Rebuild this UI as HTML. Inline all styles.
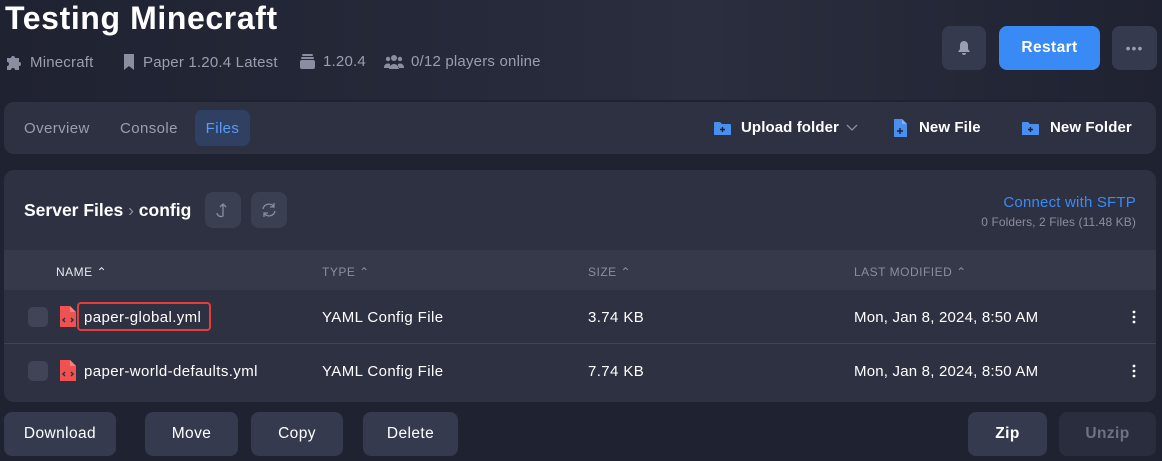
<!DOCTYPE html>
<html><head><meta charset="utf-8"><style>
*{box-sizing:border-box;margin:0;padding:0}
body{width:1162px;height:461px;overflow:hidden;background:#1f2231;font-family:"Liberation Sans",sans-serif;color:#fff;position:relative;letter-spacing:.4px}
.a{position:absolute}
.meta{top:53px;font-size:15px;color:#9a9eb0;display:flex;align-items:center;gap:7px;letter-spacing:.2px}
.panel{background:#2e3142;border-radius:10px}
.btn{position:absolute;background:#363a4e;border-radius:8px;display:flex;align-items:center;justify-content:center;font-size:15.5px;color:#fff}
.hd{top:265px;font-size:12px;color:#8a8ea0;letter-spacing:.5px}
.cell{font-size:15px;color:#fff}
.nb{font-size:15px;font-weight:bold;letter-spacing:.1px}
</style></head><body>
<div class="a" style="left:0;top:0;width:1162px;height:100px;background:linear-gradient(90deg,#1f2231 0%,#262a3a 45%,#2a2e3e 60%,#1f2231 100%)"></div>
<div class="a" style="left:5px;top:0px;font-size:32px;font-weight:bold;letter-spacing:.6px">Testing Minecraft</div>
<div class="a meta" style="left:5px"><svg width="18" height="18" viewBox="0 0 18 18"><path d="M2 5h4a2 2 0 1 1 4 0h4v4a2 2 0 1 1 0 4v4h-4a2 2 0 1 0-4 0H2v-4a2 2 0 1 0 0-4z" fill="#8a8ea0"/></svg>Minecraft</div>
<div class="a meta" style="left:122px"><svg width="14" height="18" viewBox="0 0 14 18"><path d="M2 1h10v16l-5-4-5 4z" fill="#8a8ea0"/></svg>Paper 1.20.4 Latest</div>
<div class="a meta" style="left:299px"><svg width="17" height="17" viewBox="0 0 17 17"><rect x="3" y="1" width="11" height="2" rx="1" fill="#8a8ea0"/><rect x="2" y="4" width="13" height="2" rx="1" fill="#8a8ea0"/><rect x="1" y="7" width="15" height="9" rx="2" fill="#8a8ea0"/></svg>1.20.4</div>
<div class="a meta" style="left:384px"><svg width="20" height="17" viewBox="0 0 20 17"><circle cx="10" cy="5" r="3" fill="#8a8ea0"/><circle cx="4" cy="6" r="2.2" fill="#8a8ea0"/><circle cx="16" cy="6" r="2.2" fill="#8a8ea0"/><path d="M5 16a5 5 0 0 1 10 0z M0 14a4 4 0 0 1 6-3v4H0z M20 14a4 4 0 0 0-6-3v4h6z" fill="#8a8ea0"/></svg>0/12 players online</div>
<div class="btn" style="left:942px;top:26px;width:44px;height:44px;background:#363a4e"><svg width="14" height="16" viewBox="0 0 14 16"><path d="M7 1a4 4 0 0 1 4 4v4l2 3H1l2-3V5a4 4 0 0 1 4-4z M5 13h4a2 2 0 0 1-4 0z" fill="#9a9eb0"/></svg></div>
<div class="btn" style="left:999px;top:26px;width:101px;height:44px;background:#3a8af5;font-weight:bold">Restart</div>
<div class="btn" style="left:1112px;top:26px;width:45px;height:44px;color:#9a9eb0;font-size:14px;letter-spacing:1px">•••</div>
<div class="a panel" style="left:4px;top:102px;width:1152px;height:52px"></div>
<div class="a" style="left:24px;top:120px;font-size:15px;color:#9a9eb0">Overview</div>
<div class="a" style="left:120px;top:120px;font-size:15px;color:#9a9eb0">Console</div>
<div class="a" style="left:195px;top:110px;width:55px;height:36px;background:#2f4063;border-radius:7px;color:#5b9bf5;font-size:15px;text-align:center;line-height:37px">Files</div>
<svg class="a" style="left:714px;top:121px" width="17" height="15" viewBox="0 0 17 15"><path d="M0 2a1 1 0 0 1 1-1h5l2 2h8a1 1 0 0 1 1 1v10H0z" fill="#4a8ff0"/><path d="M8.5 6v5M6 8.5h5" stroke="#1f2231" stroke-width="1.4"/></svg>
<div class="a nb" style="left:741px;top:119px">Upload folder</div>
<svg class="a" style="left:846px;top:124px" width="12" height="8" viewBox="0 0 12 8"><path d="M1 1l5 5 5-5" stroke="#8a8ea0" fill="none" stroke-width="1.3"/></svg>
<svg class="a" style="left:893px;top:119px" width="15" height="18" viewBox="0 0 15 18"><path d="M1 0h8l5 5v13H1z" fill="#4a8ff0"/><path d="M9 0v5h5" fill="#7fb0f5"/><path d="M7 9v6M4 12h6" stroke="#1f2231" stroke-width="1.4"/></svg>
<div class="a nb" style="left:919px;top:119px">New File</div>
<svg class="a" style="left:1022px;top:121px" width="17" height="15" viewBox="0 0 17 15"><path d="M0 2a1 1 0 0 1 1-1h5l2 2h8a1 1 0 0 1 1 1v10H0z" fill="#4a8ff0"/><path d="M8.5 6v5M6 8.5h5" stroke="#1f2231" stroke-width="1.4"/></svg>
<div class="a nb" style="left:1050px;top:119px">New Folder</div>
<div class="a panel" style="left:4px;top:170px;width:1152px;height:232px;overflow:hidden">
<div class="a" style="left:0;top:80px;width:1152px;height:40px;background:#353949"></div>
<div class="a" style="left:0;top:173px;width:1152px;height:1px;background:#404456"></div>
</div>
<div class="a" style="left:24px;top:200px;font-size:17.5px;font-weight:bold;letter-spacing:0">Server Files <span style="color:#8a8ea0;font-weight:normal">&#x203A;</span> config</div>
<div class="btn" style="left:205px;top:192px;width:36px;height:36px;background:#3b3f52"><svg width="16" height="18" viewBox="0 0 16 18"><path d="M2 12a4 4 0 0 0 6 3V3M5 6l3-3 3 3" stroke="#8a8ea0" fill="none" stroke-width="1.3"/></svg></div>
<div class="btn" style="left:251px;top:192px;width:36px;height:36px;background:#3b3f52"><svg width="18" height="18" viewBox="0 0 18 18"><path d="M3 8a6 6 0 0 1 11-2M15 10a6 6 0 0 1-11 2M14 2v4h-4M4 16v-4h4" stroke="#8a8ea0" fill="none" stroke-width="1.3"/></svg></div>
<div class="a" style="right:26px;top:194px;font-size:15px;color:#3a8af5;letter-spacing:.2px">Connect with SFTP</div>
<div class="a" style="right:26px;top:215px;font-size:12px;color:#8a8ea0;letter-spacing:.1px">0 Folders, 2 Files (11.48 KB)</div>
<div class="a hd" style="left:56px;color:#e8e8ee">NAME &#x2303;</div>
<div class="a hd" style="left:322px">TYPE &#x2303;</div>
<div class="a hd" style="left:588px">SIZE &#x2303;</div>
<div class="a hd" style="left:854px">LAST MODIFIED &#x2303;</div>
<div class="a" style="left:28px;top:307px;width:20px;height:20px;border-radius:5px;background:#404456"></div>
<div class="a" style="left:28px;top:361px;width:20px;height:20px;border-radius:5px;background:#404456"></div>
<svg class="a" style="left:60px;top:306px" width="16" height="21" viewBox="0 0 16 21"><path d="M0 0h10l6 6v15H0z" fill="#f05252"/><path d="M10 0v6h6" fill="#f58080"/><path d="M5 12l-2 2 2 2M11 12l2 2-2 2" stroke="#2e3142" stroke-width="1.5" fill="none"/></svg>
<svg class="a" style="left:60px;top:360px" width="16" height="21" viewBox="0 0 16 21"><path d="M0 0h10l6 6v15H0z" fill="#f05252"/><path d="M10 0v6h6" fill="#f58080"/><path d="M5 12l-2 2 2 2M11 12l2 2-2 2" stroke="#2e3142" stroke-width="1.5" fill="none"/></svg>
<div class="a" style="left:77px;top:302px;width:134px;height:29px;border:2.5px solid #e53c3c;border-radius:4px"></div>
<div class="a cell" style="left:84px;top:309px">paper-global.yml</div>
<div class="a cell" style="left:84px;top:363px">paper-world-defaults.yml</div>
<div class="a cell" style="left:322px;top:309px">YAML Config File</div>
<div class="a cell" style="left:322px;top:363px">YAML Config File</div>
<div class="a cell" style="left:588px;top:309px">3.74 KB</div>
<div class="a cell" style="left:588px;top:363px">7.74 KB</div>
<div class="a cell" style="left:854px;top:309px;letter-spacing:.2px">Mon, Jan 8, 2024, 8:50 AM</div>
<div class="a cell" style="left:854px;top:363px;letter-spacing:.2px">Mon, Jan 8, 2024, 8:50 AM</div>
<svg class="a" style="left:1132px;top:310px" width="4" height="14"><circle cx="2" cy="2" r="1.4" fill="#fff"/><circle cx="2" cy="7" r="1.4" fill="#fff"/><circle cx="2" cy="12" r="1.4" fill="#fff"/></svg>
<svg class="a" style="left:1132px;top:364px" width="4" height="14"><circle cx="2" cy="2" r="1.4" fill="#fff"/><circle cx="2" cy="7" r="1.4" fill="#fff"/><circle cx="2" cy="12" r="1.4" fill="#fff"/></svg>
<div class="btn" style="left:4px;top:412px;width:112px;height:44px">Download</div>
<div class="btn" style="left:145px;top:412px;width:93px;height:44px">Move</div>
<div class="btn" style="left:251px;top:412px;width:92px;height:44px">Copy</div>
<div class="btn" style="left:363px;top:412px;width:95px;height:44px">Delete</div>
<div class="btn" style="left:968px;top:412px;width:79px;height:44px;font-weight:bold">Zip</div>
<div class="btn" style="left:1059px;top:412px;width:97px;height:44px;background:#2a2d3d;color:#6e7284;font-weight:bold">Unzip</div>
</body></html>
